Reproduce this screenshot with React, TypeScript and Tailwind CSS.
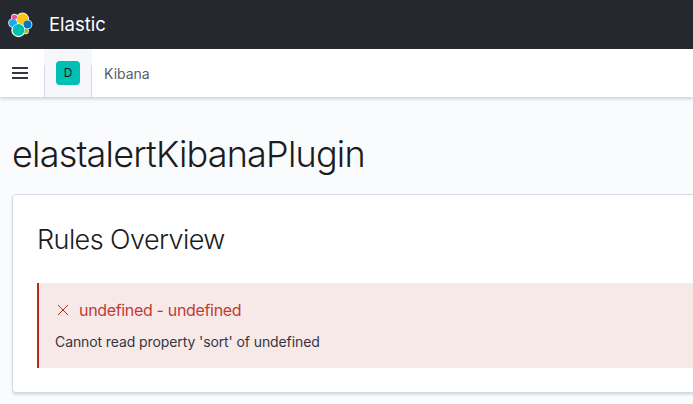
export default function App() {
  return (
    <div className="w-[693px] h-[404px] overflow-hidden bg-[#fafbfd] flex flex-col text-[#343741]" style={{ fontFamily: "Inter, sans-serif" }}>
      <header className="h-[49px] shrink-0 bg-[#25282f] flex items-center pl-2">
        <svg width="24" height="24" viewBox="0 0 24 24" className="shrink-0 overflow-visible">
          <g fill="#fff" stroke="#fff" strokeWidth="1.6">
            <circle cx="14.5" cy="6" r="5.7" />
            <circle cx="10.5" cy="17" r="6.4" />
            <circle cx="19.6" cy="11.5" r="4" />
            <circle cx="5" cy="10" r="4" />
            <circle cx="6.5" cy="4" r="2.5" />
            <circle cx="17.5" cy="18" r="2.5" />
          </g>
          <circle cx="14.5" cy="6" r="5.7" fill="#fec514" />
          <circle cx="5" cy="10" r="4" fill="#1ba9f5" />
          <circle cx="19.6" cy="11.5" r="4" fill="#0077cc" />
          <circle cx="6.5" cy="4" r="2.5" fill="#f04e98" />
          <circle cx="17.5" cy="18" r="2.5" fill="#93c90e" />
          <circle cx="10.5" cy="17" r="6.4" fill="#fff" />
          <circle cx="10.5" cy="17" r="5.9" fill="#00bfb3" />
        </svg>
        <span className="ml-[17px] text-[18.5px] leading-none text-white">Elastic</span>
      </header>
      <nav className="h-[48px] shrink-0 bg-white flex items-stretch shadow-[0_2px_3px_rgba(152,162,179,0.45)] relative">
        <div className="w-[44px] flex items-center justify-center pr-[4px]">
          <div className="w-[16px] flex flex-col gap-[3px]">
            <div className="h-[2px] bg-[#343741]" />
            <div className="h-[2px] bg-[#343741]" />
            <div className="h-[2px] bg-[#343741]" />
          </div>
        </div>
        <div className="w-[48px] bg-[#f5f7fa] flex items-center justify-center relative">
          <div className="absolute left-0 bottom-0 h-[32px] w-px bg-[#d3dae6]" />
          <div className="absolute right-0 bottom-0 h-[32px] w-px bg-[#d3dae6]" />
          <div className="w-[24px] h-[24px] rounded-[4px] bg-[#00bfb3] flex items-center justify-center text-[12px] text-[#1a1c21]">D</div>
        </div>
        <div className="flex items-center pl-[12px] text-[14px] text-[#5b5e68]">Kibana</div>
      </nav>
      <main className="flex-1 pl-3 pt-[33px] min-w-0">
        <h1 className="text-[36px] leading-[48px] font-light text-[#1a1c21] tracking-[-0.8px] whitespace-nowrap">elastalertKibanaPlugin</h1>
        <section className="mt-[16px] w-[720px] bg-white border border-[#d3dae6] rounded-[4px] shadow-[0_2px_2px_rgba(152,162,179,0.3)] pt-6 pl-6 pb-6">
          <h2 className="text-[27px] leading-[40px] font-light text-[#1a1c21] tracking-[-0.57px] whitespace-nowrap translate-y-px">Rules Overview</h2>
          <div className="mt-6 h-[85px] bg-[#f8e9e9] border-l-2 border-[#bd271e] pl-4 pt-[15px]">
            <div className="flex items-center h-[24px] text-[16px] text-[#c23a32] tracking-[-0.33px]">
              <svg width="16" height="16" viewBox="0 0 16 16" className="mr-2 shrink-0" stroke="#bd271e" strokeWidth="1" fill="none">
                <path d="M3 3l10 10M13 3L3 13" />
              </svg>
              undefined - undefined
            </div>
            <p className="mt-[9px] text-[14px] leading-[21px] text-[#343741] tracking-[-0.1px]">Cannot read property 'sort' of undefined</p>
          </div>
        </section>
      </main>
    </div>
  );
}
